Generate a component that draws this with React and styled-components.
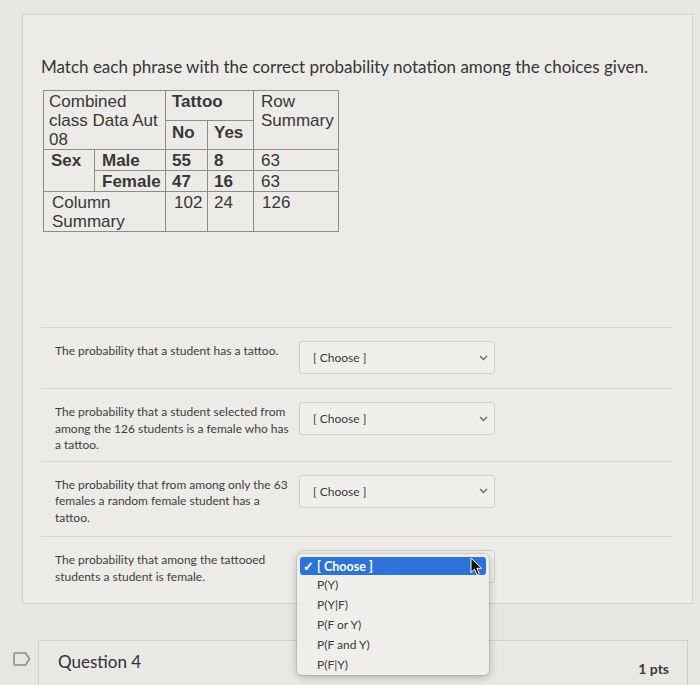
import React from "react";
import styled, { createGlobalStyle } from "styled-components";

const Global = createGlobalStyle`
  html, body { margin: 0; padding: 0; }
  body {
    background: #e7e6e2;
    font-family: Lato, "Open Sans", "Liberation Sans", sans-serif;
    overflow: hidden;
  }
`;

const Page = styled.div`
  width: 700px;
  height: 685px;
  padding-top: 14px;
  box-sizing: border-box;
  position: relative;
  overflow: hidden;
`;

const QuestionCard = styled.section`
  margin-left: 22px;
  width: 671px;
  box-sizing: border-box;
  border: 1px solid #d2d1cd;
  background: #ecebe7;
  padding: 41px 0 6px 18px;
`;

const Title = styled.p`
  margin: 0;
  font-size: 17px;
  line-height: 22px;
  color: #363636;
`;

const DataTable = styled.table`
  margin-top: 12px;
  border-collapse: collapse;
  font-family: "Liberation Sans", Arial, sans-serif;
  font-size: 17px;
  color: #383838;
  margin-left: 2px;
  table-layout: fixed;
`;

const Cell = styled.td`
  border: 1px solid #8d8d8b;
  vertical-align: top;
  padding: ${(p) => p.$pt || 1}px 0 0 ${(p) => p.$pl || 6}px;
  line-height: 19px;
  font-weight: ${(p) => (p.$bold ? 700 : 400)};
  white-space: nowrap;
  height: ${(p) => p.$h || 0}px;
  box-sizing: border-box;
`;

const MatchList = styled.div`
  margin-top: 95px;
`;

const MatchRow = styled.div`
  display: flex;
  align-items: flex-start;
  gap: 3px;
  border-top: 1px solid #d6d5d1;
  padding: 13px 0 ${(p) => p.$pb}px 14px;
  margin-right: 20px;
`;

const Phrase = styled.div`
  width: 241px;
  margin-top: 2px;
  font-size: 12px;
  line-height: 16.5px;
  color: #3e3e3e;
`;

const SelectWrap = styled.div`
  position: relative;
  margin-bottom: 5px;
`;

const SelectBox = styled.div`
  width: 196px;
  height: 33px;
  box-sizing: border-box;
  border: 1px solid #d0cfcb;
  border-radius: 3px;
  background: #f0efeb;
  display: flex;
  align-items: center;
  justify-content: space-between;
  padding: 0 6px 0 13px;
  font-size: 12px;
  color: #3a3a3a;
`;

const SelectLabel = styled.span`
  visibility: ${(p) => (p.$hidden ? "hidden" : "visible")};
`;

const Menu = styled.div`
  position: absolute;
  top: 4px;
  left: -2px;
  width: 192px;
  box-sizing: border-box;
  background: #efeeea;
  border-radius: 5px;
  box-shadow: 0 2px 8px rgba(0, 0, 0, 0.25), 0 0 0 1px rgba(0, 0, 0, 0.08);
  padding: 3px 3px 1px;
  z-index: 5;
`;

const MenuItem = styled.div`
  height: ${(p) => (p.$active ? 18 : 19.8)}px;
  display: flex;
  align-items: center;
  border-radius: 3px;
  font-size: ${(p) => (p.$active ? 12.5 : 12)}px;
  font-weight: ${(p) => (p.$active ? 700 : 400)};
  padding-left: ${(p) => (p.$active ? 3 : 17)}px;
  background: ${(p) => (p.$active ? "#2d72d9" : "transparent")};
  color: ${(p) => (p.$active ? "#ffffff" : "#3a3a3a")};
`;

const Cursor = styled.svg`
  position: absolute;
  right: 6px;
  top: 3px;
`;

const Q4Row = styled.div`
  display: flex;
  align-items: flex-start;
  gap: 7px;
  padding-left: 13px;
  margin-top: 36px;
`;

const TagIcon = styled.svg`
  margin-top: 12px;
  flex: none;
`;

const Q4Card = styled.section`
  width: 650px;
  height: 60px;
  box-sizing: border-box;
  border: 1px solid #d0cfcb;
  background: #e9e8e4;
  display: flex;
  justify-content: space-between;
  align-items: flex-start;
  padding: 10px 18px 0 19px;
`;

const Q4Title = styled.h3`
  margin: 0;
  font-size: 17px;
  line-height: 22px;
  font-weight: 400;
  color: #2e3338;
`;

const Pts = styled.span`
  margin-top: 9px;
  font-size: 14px;
  line-height: 18px;
  font-weight: 700;
  color: #3b3b3b;
`;

const Chevron = () => (
  <svg width="9" height="6" viewBox="0 0 9 6">
    <polyline points="1,1 4.5,4.5 8,1" fill="none" stroke="#6a6a6a" strokeWidth="1.4" />
  </svg>
);

const Select = ({ open }) => (
  <SelectWrap>
    <SelectBox>
      <SelectLabel $hidden={open}>[ Choose ]</SelectLabel>
      <Chevron />
    </SelectBox>
    {open && (
      <Menu>
        <MenuItem $active><span>✓ [ Choose ]</span></MenuItem>
        {["P(Y)", "P(Y|F)", "P(F or Y)", "P(F and Y)", "P(F|Y)"].map((o) => (
          <MenuItem key={o}><span>{o}</span></MenuItem>
        ))}
        <Cursor width="13" height="19" viewBox="0 0 13 19">
          <path d="M1,1 L1,15.5 L4.5,12.2 L7,17.8 L9.3,16.8 L6.9,11.3 L11.5,11.3 Z" fill="#111" stroke="#fff" strokeWidth="1" strokeLinejoin="round" />
        </Cursor>
      </Menu>
    )}
  </SelectWrap>
);

const rows = [
  { text: "The probability that a student has a tattoo.", pb: 9 },
  { text: "The probability that a student selected from among the 126 students is a female who has a tattoo.", pb: 7 },
  { text: "The probability that from among only the 63 females a random female student has a tattoo.", pb: 10 },
  { text: "The probability that among the tattooed students a student is female.", pb: 9 },
];

export default function App() {
  return (
    <>
      <Global />
      <Page>
        <QuestionCard>
          <Title>Match each phrase with the correct probability notation among the choices given.</Title>
          <DataTable>
            <colgroup>
              <col style={{ width: 51 }} />
              <col style={{ width: 71 }} />
              <col style={{ width: 42 }} />
              <col style={{ width: 46 }} />
              <col style={{ width: 85 }} />
            </colgroup>
            <tbody>
              <tr>
                <Cell colSpan={2} rowSpan={2} $pl={5}>
                  Combined<br />class Data Aut<br />08
                </Cell>
                <Cell colSpan={2} $bold $h={28} $pt={1}>Tattoo</Cell>
                <Cell rowSpan={2} $pl={7}>Row<br />Summary</Cell>
              </tr>
              <tr>
                <Cell $bold $h={28} $pt={2}>No</Cell>
                <Cell $bold $pt={2}>Yes</Cell>
              </tr>
              <tr>
                <Cell rowSpan={2} $bold $pl={7}>Sex</Cell>
                <Cell $bold $h={21} $pl={7}>Male</Cell>
                <Cell $bold>55</Cell>
                <Cell $bold>8</Cell>
                <Cell $pl={7}>63</Cell>
              </tr>
              <tr>
                <Cell $bold $h={21} $pl={7}>Female</Cell>
                <Cell $bold>47</Cell>
                <Cell $bold>16</Cell>
                <Cell $pl={7}>63</Cell>
              </tr>
              <tr>
                <Cell colSpan={2} $h={37} $pl={8}>Column<br />Summary</Cell>
                <Cell $pl={8}>102</Cell>
                <Cell>24</Cell>
                <Cell $pl={8}>126</Cell>
              </tr>
            </tbody>
          </DataTable>
          <MatchList>
            {rows.map((r, i) => (
              <MatchRow key={i} $pb={r.pb}>
                <Phrase>{r.text}</Phrase>
                <Select open={i === 3} />
              </MatchRow>
            ))}
          </MatchList>
        </QuestionCard>
        <Q4Row>
          <TagIcon width="18" height="14" viewBox="0 0 18 14">
            <path d="M2,1 H12.5 L16.5,7 L12.5,13 H2 Q1,13 1,12 V2 Q1,1 2,1 Z" fill="none" stroke="#8a8a8a" strokeWidth="1.5" strokeLinejoin="round" />
          </TagIcon>
          <Q4Card>
            <Q4Title>Question 4</Q4Title>
            <Pts>1 pts</Pts>
          </Q4Card>
        </Q4Row>
      </Page>
    </>
  );
}
